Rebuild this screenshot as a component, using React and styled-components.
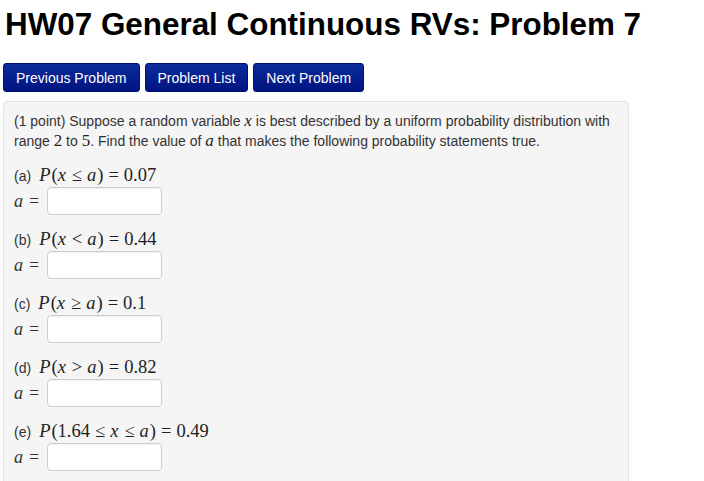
import React from "react";
import styled, { createGlobalStyle } from "styled-components";

const GlobalStyle = createGlobalStyle`
  body {
    margin: 0;
    background: #ffffff;
    font-family: "Liberation Sans", Arial, sans-serif;
    color: #333;
  }
`;

const Page = styled.div`
  padding: 7px 3px 0 3px;
`;

const Title = styled.h1`
  margin: 0 0 0 2px;
  font-family: "Liberation Sans", Arial, sans-serif;
  font-size: 31.4px;
  line-height: 36px;
  font-weight: bold;
  color: #000;
`;

const NavBar = styled.div`
  display: flex;
  gap: 5px;
  margin-top: 20px;
`;

const NavButton = styled.button`
  height: 29px;
  padding: 0 12px;
  font-family: "Liberation Sans", Arial, sans-serif;
  font-size: 14px;
  color: #fff;
  background: linear-gradient(to bottom, #0c2c9c, #001480);
  border: 1px solid #001070;
  border-radius: 3px;
  cursor: pointer;
`;

const Panel = styled.div`
  margin-top: 9px;
  width: 604px;
  padding: 9px 10px 20px 10px;
  background: #f5f5f5;
  border: 1px solid #e3e3e3;
  border-radius: 4px;
  min-height: 400px;
`;

const Intro = styled.p`
  margin: 0;
  font-size: 14px;
  line-height: 20px;
  color: #333;
`;

const M = styled.span`
  font-family: "Liberation Serif", "Times New Roman", serif;
  font-style: ${(p) => (p.up ? "normal" : "italic")};
  font-size: 17px;
  line-height: 0;
  color: #222;
`;

const Item = styled.div`
  margin-top: 14px;
`;

const QuestionLine = styled.div`
  display: flex;
  align-items: baseline;
  height: 22px;
  font-size: 14px;
  color: #333;
`;

const Letter = styled.span`
  margin-right: 8px;
`;

const Formula = styled.span`
  font-family: "Liberation Serif", "Times New Roman", serif;
  font-size: 18.5px;
  color: #222;
  white-space: nowrap;
`;

const Var = styled.i`
  font-style: italic;
  padding-right: 1px;
`;

const Rel = styled.span`
  margin: 0 5px;
`;

const AnswerRow = styled.div`
  display: flex;
  align-items: center;
  gap: 6px;
  height: 28px;
`;

const AnswerLabel = styled.span`
  width: 27px;
  font-family: "Liberation Serif", "Times New Roman", serif;
  font-size: 18px;
  color: #333;
  white-space: nowrap;
`;

const Input = styled.input`
  box-sizing: border-box;
  width: 115px;
  height: 28px;
  background: #fff;
  border: 1px solid #ccc;
  border-radius: 4px;
  box-shadow: inset 0 1px 1px rgba(0, 0, 0, 0.06);
`;

const Question = ({ letter, children }) => (
  <Item>
    <QuestionLine>
      <Letter>({letter})</Letter>
      <Formula>{children}</Formula>
    </QuestionLine>
    <AnswerRow>
      <AnswerLabel>
        <Var>a</Var>
        <Rel>=</Rel>
      </AnswerLabel>
      <Input type="text" />
    </AnswerRow>
  </Item>
);

const simple = [
  { letter: "a", rel: "≤", val: "0.07" },
  { letter: "b", rel: "<", val: "0.44" },
  { letter: "c", rel: "≥", val: "0.1" },
  { letter: "d", rel: ">", val: "0.82" },
];

export default function App() {
  return (
    <Page>
      <GlobalStyle />
      <Title>HW07 General Continuous RVs: Problem 7</Title>
      <NavBar>
        <NavButton>Previous Problem</NavButton>
        <NavButton>Problem List</NavButton>
        <NavButton>Next Problem</NavButton>
      </NavBar>
      <Panel>
        <Intro>
          (1 point) Suppose a random variable <M>x</M> is best described by a
          uniform probability distribution with range <M up>2</M> to{" "}
          <M up>5</M>. Find the value of <M>a</M> that makes the following
          probability statements true.
        </Intro>
        {simple.map((q) => (
          <Question key={q.letter} letter={q.letter}>
            <Var>P</Var>(<Var>x</Var>
            <Rel>{q.rel}</Rel>
            <Var>a</Var>)<Rel>=</Rel>
            {q.val}
          </Question>
        ))}
        <Question letter="e">
          <Var>P</Var>(1.64<Rel>≤</Rel>
          <Var>x</Var>
          <Rel>≤</Rel>
          <Var>a</Var>)<Rel>=</Rel>0.49
        </Question>
      </Panel>
    </Page>
  );
}
